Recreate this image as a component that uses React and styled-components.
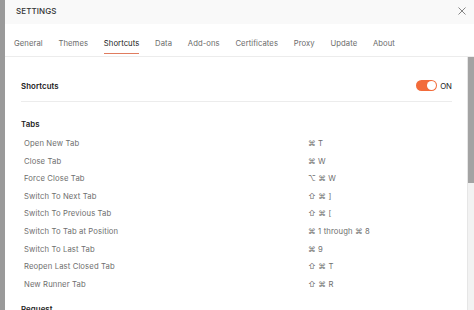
import React from "react";
import styled, { createGlobalStyle } from "styled-components";

const Global = createGlobalStyle`
  html, body { margin: 0; padding: 0; }
  body {
    background: #9a9a9a;
    font-family: Inter, "Noto Sans", sans-serif;
    width: 474px;
    height: 310px;
    overflow: hidden;
  }
`;

const Modal = styled.div`
  margin-left: 5px;
  height: 310px;
  background: #ffffff;
  display: flex;
  flex-direction: column;
  overflow: hidden;
`;

const Header = styled.div`
  height: 24px;
  flex: none;
  box-sizing: border-box;
  background: #f9f9f9;
  display: flex;
  align-items: center;
  justify-content: space-between;
  padding: 0 8px 3px 11px;
`;

const Title = styled.div`
  font-size: 8px;
  font-weight: 500;
  color: #333;
  letter-spacing: 0.1px;
`;

const Close = styled.svg`
  width: 8px;
  height: 8px;
`;

const TabBar = styled.div`
  height: 33px;
  flex: none;
  box-sizing: border-box;
  display: flex;
  align-items: stretch;
  gap: 15.8px;
  padding-left: 9px;
  border-bottom: 1px solid #ececec;
`;

const Tab = styled.div`
  display: flex;
  align-items: center;
  position: relative;
  padding-top: 7px;
  font-size: 7.7px;
  letter-spacing: 0.05px;
  color: ${(p) => (p.$active ? "#212121" : "#6b6b6b")};
  &::after {
    content: "";
    display: ${(p) => (p.$active ? "block" : "none")};
    position: absolute;
    left: 0;
    right: 0;
    bottom: 2px;
    height: 1.5px;
    background: #e07c5f;
  }
`;

const Body = styled.div`
  flex: 1;
  display: flex;
  min-height: 0;
`;

const Content = styled.div`
  flex: 1;
  padding: 0 15px 0 16px;
`;

const Scrollbar = styled.div`
  width: 6px;
  background: #f2f2f2;
  border-left: 1px solid #e6e6e6;
  display: flex;
  flex-direction: column;
`;

const Thumb = styled.div`
  height: 126px;
  background: #a3a3a3;
`;

const ToggleRow = styled.div`
  display: flex;
  align-items: center;
  justify-content: space-between;
  box-sizing: border-box;
  height: 45px;
  padding-top: 13px;
  border-bottom: 1px solid #ececec;
`;

const Heading = styled.div`
  font-size: 7.8px;
  font-weight: 600;
  color: #212121;
  letter-spacing: 0.1px;
`;

const ToggleWrap = styled.div`
  display: flex;
  align-items: center;
  gap: 3px;
  font-size: 7.8px;
  color: #212121;
`;

const Switch = styled.div`
  width: 21px;
  height: 11px;
  border-radius: 6px;
  background: #f26b3a;
  display: flex;
  align-items: center;
  justify-content: flex-end;
  padding: 0 1px;
  box-sizing: border-box;
`;

const Knob = styled.div`
  width: 9px;
  height: 9px;
  border-radius: 50%;
  background: #fff;
`;

const Section = styled.div`
  padding-top: ${(p) => p.$gap}px;
`;

const SectionTitle = styled(Heading)`
  height: 12px;
  line-height: 12px;
  margin-bottom: 5px;
`;

const Row = styled.div`
  display: grid;
  grid-template-columns: 284px 1fr;
  height: 17.55px;
  align-items: center;
  padding-left: 3px;
  font-size: 7.7px;
  letter-spacing: 0.12px;
  color: #6e6e6e;
`;

const close = (
  <Close viewBox="0 0 8 8">
    <path d="M0.5 0.5 L7.5 7.5 M7.5 0.5 L0.5 7.5" stroke="#777" strokeWidth="0.9" />
  </Close>
);

const tabs = ["General", "Themes", "Shortcuts", "Data", "Add-ons", "Certificates", "Proxy", "Update", "About"];

const rows = [
  ["Open New Tab", "⌘ T"],
  ["Close Tab", "⌘ W"],
  ["Force Close Tab", "⌥ ⌘ W"],
  ["Switch To Next Tab", "⇧ ⌘ ]"],
  ["Switch To Previous Tab", "⇧ ⌘ ["],
  ["Switch To Tab at Position", "⌘ 1 through ⌘ 8"],
  ["Switch To Last Tab", "⌘ 9"],
  ["Reopen Last Closed Tab", "⇧ ⌘ T"],
  ["New Runner Tab", "⇧ ⌘ R"],
];

export default function App() {
  return (
    <>
      <Global />
      <Modal>
        <Header>
          <Title>SETTINGS</Title>
          {close}
        </Header>
        <TabBar>
          {tabs.map((t) => (
            <Tab key={t} $active={t === "Shortcuts"}>{t}</Tab>
          ))}
        </TabBar>
        <Body>
          <Content>
            <ToggleRow>
              <Heading>Shortcuts</Heading>
              <ToggleWrap>
                <Switch><Knob /></Switch>
                ON
              </ToggleWrap>
            </ToggleRow>
            <Section $gap={16}>
              <SectionTitle>Tabs</SectionTitle>
              {rows.map(([a, b]) => (
                <Row key={a}>
                  <span>{a}</span>
                  <span>{b}</span>
                </Row>
              ))}
            </Section>
            <Section $gap={10}>
              <SectionTitle>Request</SectionTitle>
            </Section>
          </Content>
          <Scrollbar>
            <Thumb />
          </Scrollbar>
        </Body>
      </Modal>
    </>
  );
}
